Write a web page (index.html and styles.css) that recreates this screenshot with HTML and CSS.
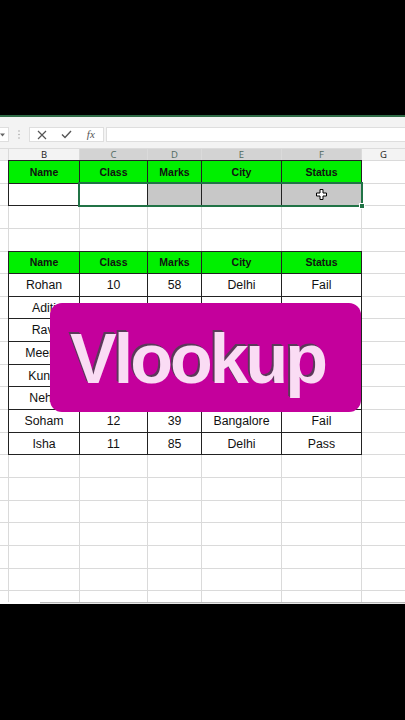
FILE: index.html
```html
<!DOCTYPE html>
<html>
<head>
<meta charset="utf-8">
<link rel="stylesheet" href="styles.css">
</head>
<body>
<div class="screen">
  <div class="top-black"></div>
  <div class="app">
    <div class="accent"></div>
    <div class="formula-row">
      <div class="namebox">
        <svg width="5" height="4" viewBox="0 0 5 4"><path d="M0 0.5h5L2.5 3.5z" fill="#666"/></svg>
      </div>
      <div class="grip">
        <svg width="2" height="9" viewBox="0 0 2 9"><circle cx="1" cy="1" r="0.8" fill="#aaa"/><circle cx="1" cy="4.5" r="0.8" fill="#aaa"/><circle cx="1" cy="8" r="0.8" fill="#aaa"/></svg>
      </div>
      <div class="fx-box">
        <div class="fx-slot">
          <svg width="10" height="10" viewBox="0 0 10 10"><path d="M1 1L9 9M9 1L1 9" stroke="#555" stroke-width="1.2" fill="none"/></svg>
        </div>
        <div class="fx-slot">
          <svg width="11" height="9" viewBox="0 0 11 9"><path d="M1 4.5L4 7.5L10 1" stroke="#555" stroke-width="1.4" fill="none"/></svg>
        </div>
        <div class="fx-slot"><span class="fx">fx</span></div>
      </div>
      <div class="formula-input"></div>
    </div>

    <div class="sheet">
      <!-- column headers -->
      <div class="ch corner"></div>
      <div class="ch">B</div>
      <div class="ch sel">C</div>
      <div class="ch sel">D</div>
      <div class="ch sel">E</div>
      <div class="ch sel">F</div>
      <div class="ch">G</div>

      <!-- row 1 -->
      <div class="c rh"></div>
      <div class="c t h">Name</div>
      <div class="c t h">Class</div>
      <div class="c t h">Marks</div>
      <div class="c t h">City</div>
      <div class="c t h">Status</div>
      <div class="c"></div>

      <!-- row 2 -->
      <div class="c rh"></div>
      <div class="c t"></div>
      <div class="c t anchor"><div class="selection"></div></div>
      <div class="c t g"></div>
      <div class="c t g"></div>
      <div class="c t g">
        <svg class="cursor" width="11" height="11" viewBox="0 0 11 11"><path d="M4 0.5h3v3.5h3.5v3H7v3.5H4V7H0.5V4H4z" fill="#fff" stroke="#000" stroke-width="1"/></svg>
      </div>
      <div class="c"></div>

      <!-- row 3 -->
      <div class="c rh"></div><div class="c"></div><div class="c"></div><div class="c"></div><div class="c"></div><div class="c"></div><div class="c"></div>
      <!-- row 4 -->
      <div class="c rh"></div><div class="c"></div><div class="c"></div><div class="c"></div><div class="c"></div><div class="c"></div><div class="c"></div>

      <!-- row 5 : table header -->
      <div class="c rh"></div>
      <div class="c t h">Name</div>
      <div class="c t h">Class</div>
      <div class="c t h">Marks</div>
      <div class="c t h">City</div>
      <div class="c t h">Status</div>
      <div class="c"></div>

      <div class="c rh"></div><div class="c t">Rohan</div><div class="c t">10</div><div class="c t">58</div><div class="c t">Delhi</div><div class="c t">Fail</div><div class="c"></div>
      <div class="c rh"></div><div class="c t">Aditi</div><div class="c t"></div><div class="c t"></div><div class="c t"></div><div class="c t"></div><div class="c"></div>
      <div class="c rh"></div><div class="c t">Ravi</div><div class="c t"></div><div class="c t"></div><div class="c t"></div><div class="c t"></div><div class="c"></div>
      <div class="c rh"></div><div class="c t">Meena</div><div class="c t"></div><div class="c t"></div><div class="c t"></div><div class="c t"></div><div class="c"></div>
      <div class="c rh"></div><div class="c t">Kunal</div><div class="c t"></div><div class="c t"></div><div class="c t"></div><div class="c t"></div><div class="c"></div>
      <div class="c rh"></div><div class="c t">Neha</div><div class="c t"></div><div class="c t"></div><div class="c t"></div><div class="c t"></div><div class="c"></div>
      <div class="c rh"></div><div class="c t">Soham</div><div class="c t">12</div><div class="c t">39</div><div class="c t">Bangalore</div><div class="c t">Fail</div><div class="c"></div>
      <div class="c rh"></div><div class="c t">Isha</div><div class="c t">11</div><div class="c t">85</div><div class="c t">Delhi</div><div class="c t">Pass</div><div class="c"></div>

      <div class="c rh"></div><div class="c"></div><div class="c"></div><div class="c"></div><div class="c"></div><div class="c"></div><div class="c"></div>
      <div class="c rh"></div><div class="c"></div><div class="c"></div><div class="c"></div><div class="c"></div><div class="c"></div><div class="c"></div>
      <div class="c rh"></div><div class="c"></div><div class="c"></div><div class="c"></div><div class="c"></div><div class="c"></div><div class="c"></div>
      <div class="c rh"></div><div class="c"></div><div class="c"></div><div class="c"></div><div class="c"></div><div class="c"></div><div class="c"></div>
      <div class="c rh"></div><div class="c"></div><div class="c"></div><div class="c"></div><div class="c"></div><div class="c"></div><div class="c"></div>
      <div class="c rh"></div><div class="c"></div><div class="c"></div><div class="c"></div><div class="c"></div><div class="c"></div><div class="c"></div>
      <div class="c rh"></div><div class="c"></div><div class="c"></div><div class="c"></div><div class="c"></div><div class="c"></div><div class="c"></div>

      <div class="badge"><span class="badge-text">Vlookup</span></div>
    </div>

    <div class="hscroll"><div class="thumb"></div></div>
  </div>
</div>
</body>
</html>
```

FILE: styles.css
```css
html, body {
  margin: 0;
  padding: 0;
  background: #000;
}

body {
  font-family: "Liberation Sans", Arial, sans-serif;
}

.screen {
  width: 405px;
  height: 720px;
  overflow: hidden;
  background: #000;
}

.top-black {
  height: 115px;
}

.app {
  background: #fff;
}

.accent {
  height: 2px;
  background: #2f6d47;
}

.formula-row {
  height: 32px;
  box-sizing: border-box;
  background: #f3f3f3;
  border-bottom: 1px solid #dcdcdc;
  display: flex;
  align-items: flex-start;
  padding-top: 10px;
}

.namebox {
  width: 9px;
  height: 15px;
  box-sizing: border-box;
  background: #fff;
  border: 1px solid #dedede;
  border-left: none;
  display: flex;
  align-items: center;
}

.grip {
  width: 20px;
  height: 15px;
  display: flex;
  align-items: center;
  justify-content: center;
}

.fx-box {
  width: 75px;
  height: 15px;
  box-sizing: border-box;
  background: #fff;
  border: 1px solid #dedede;
  display: flex;
}

.fx-slot {
  width: 25px;
  display: flex;
  align-items: center;
  justify-content: center;
}

.fx {
  font-family: "Liberation Serif", "Times New Roman", serif;
  font-style: italic;
  font-size: 11px;
  color: #555;
  line-height: 1;
}

.formula-input {
  flex: 1;
  height: 15px;
  margin-left: 2px;
  box-sizing: border-box;
  background: #fff;
  border: 1px solid #dedede;
  border-right: none;
}

.sheet {
  position: relative;
  height: 453px;
  overflow: hidden;
  display: grid;
  grid-template-columns: 8px 70px 67px 53px 79px 79px 1fr;
  grid-template-rows: 11px repeat(20, 21.65px);
  gap: 1px;
  background: #dadada;
}

.ch {
  background: #f3f3f3;
  font-family: "Open Sans", "Noto Sans", sans-serif;
  font-size: 9.5px;
  color: #222;
  display: flex;
  align-items: center;
  justify-content: center;
  line-height: 1;
}

.ch.sel {
  background: #d3d3d3;
  color: #4f6a61;
}

.c {
  background: #fff;
  display: flex;
  align-items: center;
  justify-content: center;
  font-size: 12.3px;
  color: #111;
  white-space: nowrap;
}

.rh {
  background: #fff;
}

.t {
  outline: 1px solid #222;
}

.h {
  background: #00f000;
  font-weight: bold;
  font-size: 10.5px;
  color: #111;
}

.g {
  background: #c8c8c8;
}

.anchor {
  position: relative;
}

.selection {
  position: absolute;
  left: -2px;
  top: -2px;
  width: 285px;
  height: 25.65px;
  box-sizing: border-box;
  border: 2px solid #217346;
  z-index: 1;
}

.selection::after {
  content: "";
  position: absolute;
  right: -4px;
  bottom: -4px;
  width: 4px;
  height: 4px;
  background: #217346;
  border: 1px solid #fff;
}

.cursor {
  display: block;
}

.badge {
  position: absolute;
  left: 50px;
  top: 154px;
  width: 311px;
  height: 109px;
  box-sizing: border-box;
  padding: 21px 0 0 20px;
  border-radius: 12px;
  background: #c4009c;
  z-index: 2;
}

.badge-text {
  display: block;
  font-family: "Liberation Sans", Arial, sans-serif;
  font-weight: bold;
  font-size: 70px;
  line-height: 70px;
  letter-spacing: -3px;
  color: #fadcf4;
  text-shadow: -1px -1px 0 #5c3a5a, -2px -2px 0 #5c3a5a;
  white-space: nowrap;
}

.hscroll {
  height: 2px;
  background: #fff;
}

.thumb {
  margin-left: 40px;
  height: 2px;
  box-sizing: border-box;
  border-top: 1px solid #b8b8b8;
  background: #e6e6e6;
}
```
